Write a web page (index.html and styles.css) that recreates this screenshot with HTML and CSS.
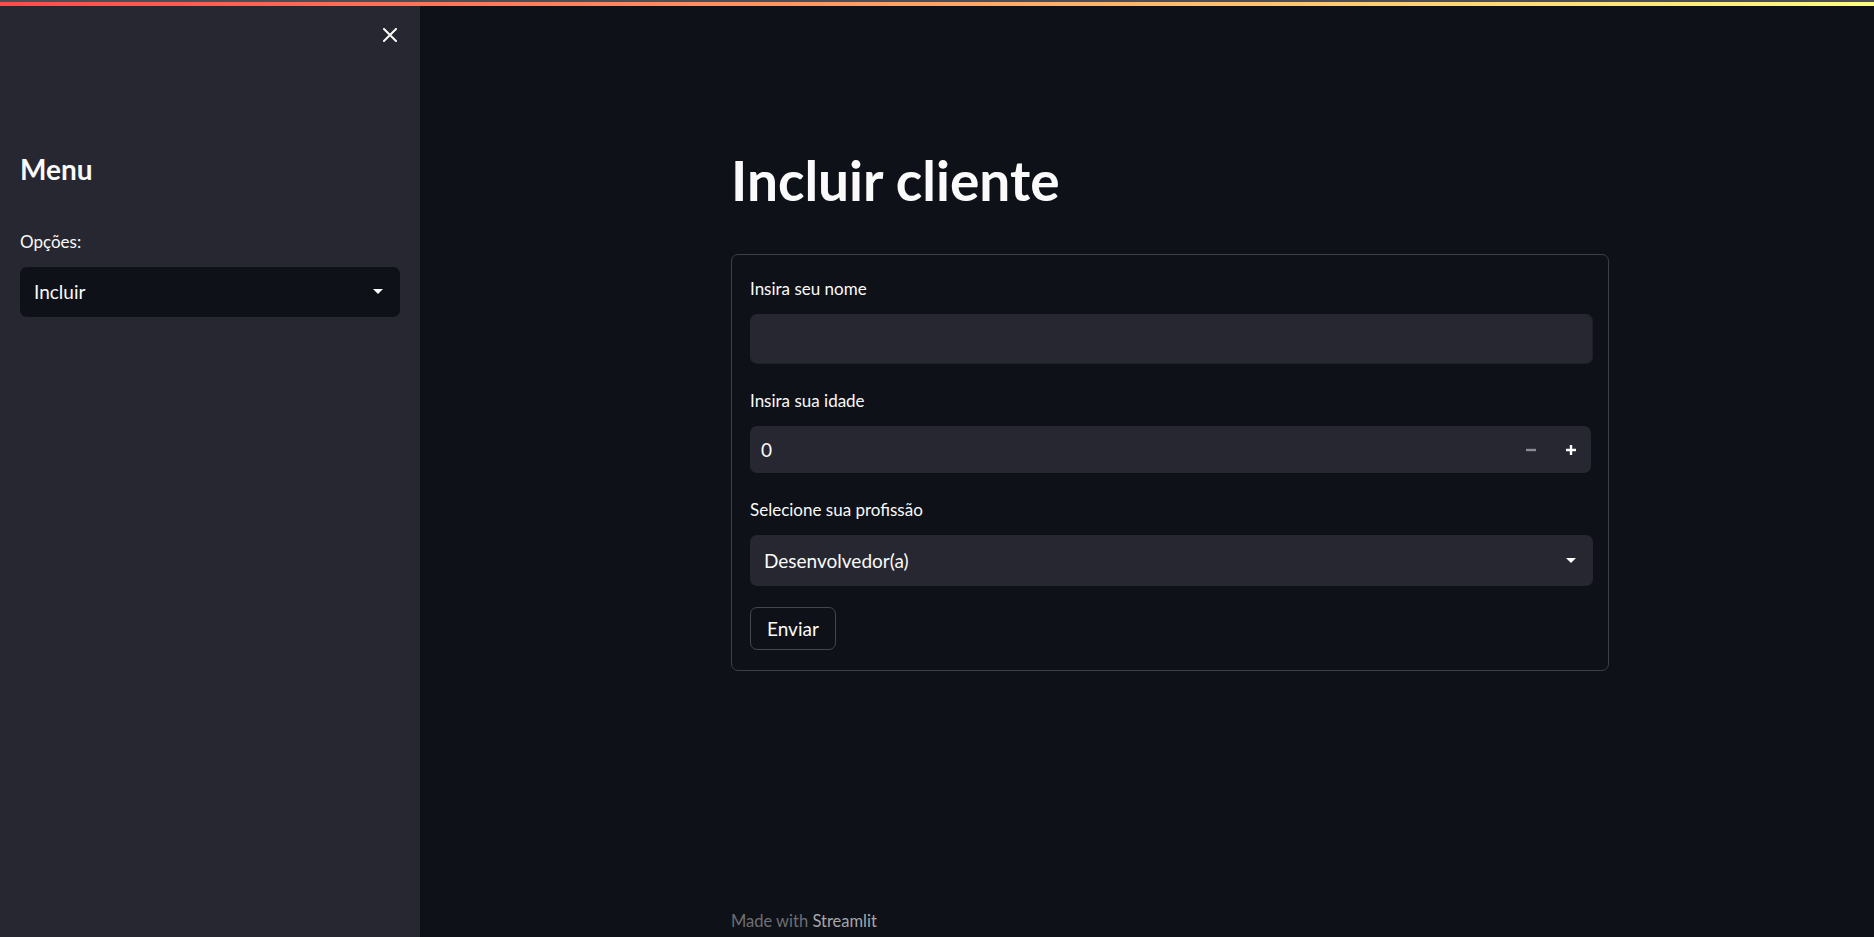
FILE: index.html
```html
<!DOCTYPE html>
<html lang="pt">
<head>
    <meta charset="UTF-8">
    <meta name="viewport" content="width=device-width, initial-scale=1.0">
    <title>Incluir cliente</title>
    <link rel="stylesheet" href="styles.css">
</head>
<body>
    <div class="topbar"><div class="decoration"></div></div>

    <div class="app">
        <aside class="sidebar">
            <div class="close-row">
                <button class="close-btn" aria-label="Fechar">
                    <svg width="14" height="14" viewBox="0 0 14 14">
                        <path d="M1 1L13 13M13 1L1 13" stroke="#fafafa" stroke-width="2" stroke-linecap="square"/>
                    </svg>
                </button>
            </div>

            <h2 class="side-title">Menu</h2>

            <label class="label">Opções:</label>
            <div class="select select-dark">
                <span>Incluir</span>
                <svg class="caret" width="10" height="5" viewBox="0 0 10 5"><path d="M0 0H10L5 5Z" fill="#fafafa"/></svg>
            </div>
        </aside>

        <main class="main">
            <div class="block">
                <h1 class="title">Incluir cliente</h1>

                <form class="form-box">
                    <div class="field">
                        <label class="label">Insira seu nome</label>
                        <div class="text-input"></div>
                    </div>

                    <div class="field">
                        <label class="label">Insira sua idade</label>
                        <div class="number-input">
                            <span class="value">0</span>
                            <div class="steppers">
                                <span class="step">
                                    <svg width="10" height="10" viewBox="0 0 10 10"><path d="M0 5H10" stroke="#8b8c93" stroke-width="2.4"/></svg>
                                </span>
                                <span class="step">
                                    <svg width="10" height="10" viewBox="0 0 10 10"><path d="M0 5H10M5 0V10" stroke="#fafafa" stroke-width="2.4"/></svg>
                                </span>
                            </div>
                        </div>
                    </div>

                    <div class="field">
                        <label class="label">Selecione sua profissão</label>
                        <div class="select">
                            <span>Desenvolvedor(a)</span>
                            <svg class="caret" width="10" height="5" viewBox="0 0 10 5"><path d="M0 0H10L5 5Z" fill="#fafafa"/></svg>
                        </div>
                    </div>

                    <button type="button" class="submit">Enviar</button>
                </form>
            </div>

            <footer class="footer">Made with <span class="brand">Streamlit</span></footer>
        </main>
    </div>
</body>
</html>
```

FILE: styles.css
```css
* {
    margin: 0;
    padding: 0;
    box-sizing: border-box;
}

body {
    background: #0e1117;
    color: #fafafa;
    font-family: 'Lato', 'Noto Sans', sans-serif;
    font-size: 19px;
    height: 100vh;
    overflow: hidden;
}

.topbar {
    height: 6px;
    border-top: 2px solid #4c4d57;
}

.decoration {
    height: 4px;
    background: linear-gradient(90deg, #ff4b4b, #fffd80);
}

.app {
    display: flex;
    height: calc(100vh - 6px);
}

/* sidebar */
.sidebar {
    width: 420px;
    flex-shrink: 0;
    background: #262730;
    padding: 22px 20px 0 20px;
}

.close-row {
    display: flex;
    justify-content: flex-end;
    padding-right: 3px;
}

.close-btn {
    background: none;
    border: none;
    width: 14px;
    height: 14px;
    display: flex;
    cursor: pointer;
}

.side-title {
    font-size: 28px;
    font-weight: 700;
    line-height: 1.2;
    margin-top: 111px;
    margin-bottom: 43px;
}

.label {
    display: block;
    font-size: 17px;
    line-height: 24px;
    margin-bottom: 13px;
}

.select {
    height: 51px;
    background: #262730;
    border-radius: 7px;
    display: flex;
    align-items: center;
    justify-content: space-between;
    padding: 0 17px 0 14px;
}

.select-dark {
    background: #0e1117;
    height: 50px;
}

.caret {
    display: block;
}

/* main */
.main {
    flex: 1;
    display: flex;
    flex-direction: column;
    padding: 141px 0 4px 311px;
}

.block {
    width: 878px;
}

.title {
    font-size: 55px;
    font-weight: 700;
    line-height: 1.2;
    margin-bottom: 41px;
}

.form-box {
    border: 1px solid #3d3f46;
    border-radius: 7px;
    padding: 22px 15px 20px 18px;
}

.field + .field {
    margin-top: 25px;
}

.text-input {
    height: 50px;
    background: #262730;
    border: 1px solid #262730;
    border-right-color: #1f2028;
    border-bottom-color: #1f2028;
    border-radius: 7px;
}

.number-input {
    height: 47px;
    margin-right: 2px;
    background: #262730;
    border-radius: 7px;
    display: flex;
    align-items: center;
    justify-content: space-between;
    padding-left: 11px;
}

.steppers {
    display: flex;
    height: 100%;
}

.step {
    width: 40px;
    display: flex;
    align-items: center;
    justify-content: center;
}

.step svg {
    display: block;
}

.submit {
    margin-top: 21px;
    height: 43px;
    padding: 0 16px;
    background: #0e1117;
    color: #fafafa;
    border: 1px solid #45474e;
    border-radius: 7px;
    font-family: inherit;
    font-size: 19px;
}

.footer {
    margin-top: auto;
    font-size: 16.5px;
    line-height: 24px;
    color: #6d6f74;
}

.brand {
    color: #a6a7ab;
}
```
